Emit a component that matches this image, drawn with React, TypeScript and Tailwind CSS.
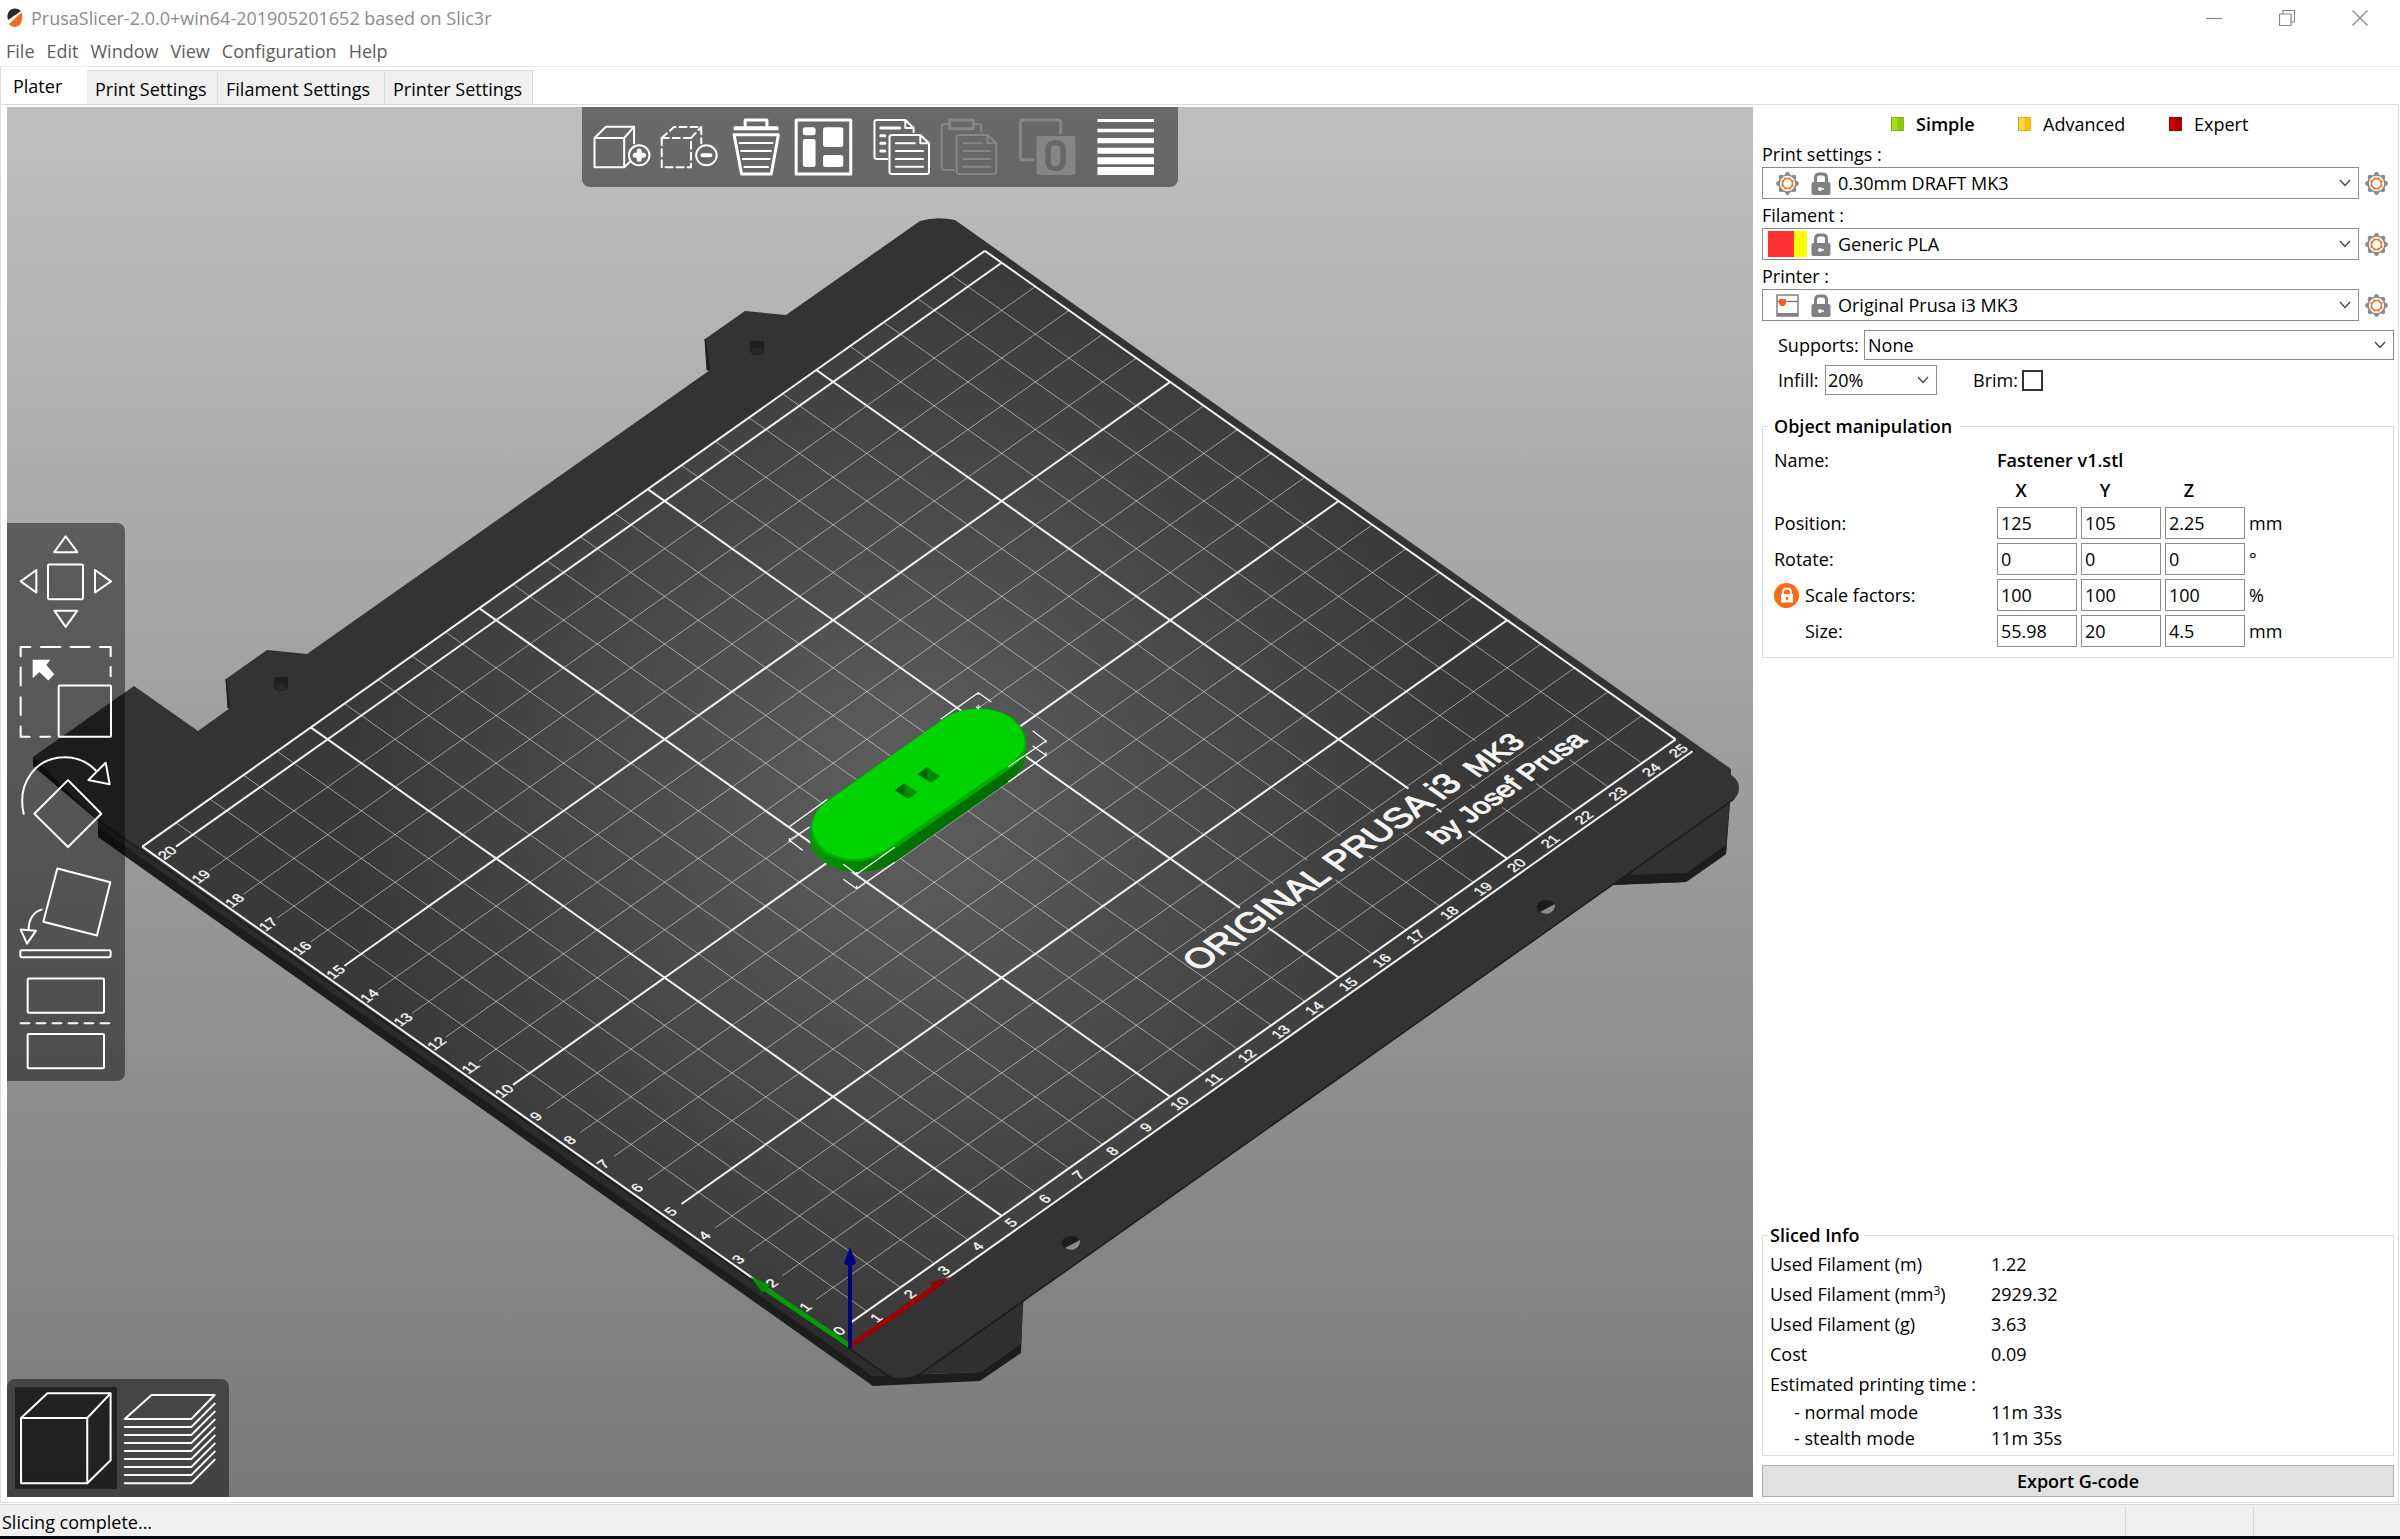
import React from "react";

const UNIT_X = 33.7;
const UNIT_Y = 23.83;
const ORIGIN_X = 850;
const ORIGIN_Y = 1347;

/* Project a point on the print bed (centimetres) to the scene. */
function project(x: number, y: number): [number, number] {
  return [ORIGIN_X + (x - y) * UNIT_X, ORIGIN_Y - (x + y) * UNIT_Y];
}

function BedLine({ a, b, bold = false }: { a: [number, number]; b: [number, number]; bold?: boolean }) {
  const [x1, y1] = project(a[0], a[1]);
  const [x2, y2] = project(b[0], b[1]);
  return (
    <line
      x1={x1}
      y1={y1}
      x2={x2}
      y2={y2}
      stroke={bold ? "#f4f4f4" : "#ffffff"}
      strokeOpacity={bold ? 1 : 0.5}
      strokeWidth={bold ? 2 : 1}
    />
  );
}

function Grid() {
  const lines: React.ReactNode[] = [];
  for (let x = 1; x <= 24; x++) {
    const bold = x % 5 === 0;
    const spans: [number, number][] =
      x >= 20 && x <= 23
        ? [[0.5, 1.65], [2.45, 2.6], [3.43, 21]]
        : x >= 14 && x <= 19
          ? [[0.5, 2.6], [3.43, 21]]
          : [[0.5, 21]];
    spans.forEach(([from, to]) =>
      lines.push(<BedLine key={`x${x}-${from}`} a={[x, from]} b={[x, to]} bold={bold} />),
    );
  }
  for (let k = 0; k <= 20; k++) {
    lines.push(<BedLine key={`y${k}`} a={[0.5, k + 0.5]} b={[25, k + 0.5]} bold={k % 5 === 0} />);
  }
  return (
    <g>
      {lines}
      <BedLine a={[0, 0]} b={[25, 0]} bold />
      <BedLine a={[0, 0]} b={[0, 21]} bold />
      <BedLine a={[0, 21]} b={[25, 21]} bold />
      <BedLine a={[25, 0.5]} b={[25, 21]} bold />
    </g>
  );
}

function BedLabels() {
  return (
    <g
      transform="matrix(0.337 -0.2383 0.337 0.2383 850 1347)"
      fill="#f4f4f4"
      fontFamily="'Liberation Sans', Arial, sans-serif"
    >
      <g fontSize="35" textAnchor="middle" stroke="#f4f4f4" strokeWidth="1">
        {Array.from({ length: 25 }, (_, i) => (
          <text key={`x${i}`} x={i === 24 ? 2480 : (i + 1) * 100} y={-10}>
            {i + 1}
          </text>
        ))}
        {Array.from({ length: 21 }, (_, i) => (
          <text key={`y${i}`} x={i > 9 ? 24 : 18} y={-(i * 100 + 38)}>
            {i}
          </text>
        ))}
      </g>
      <g stroke="#f4f4f4" strokeWidth="3">
        <text x="1304" y="-269" fontSize="83">
          ORIGINAL PRUSA i3
        </text>
        <text x="2124" y="-263" fontSize="71">
          MK3
        </text>
        <text x="1930" y="-177" fontSize="66">
          by Josef Prusa
        </text>
      </g>
    </g>
  );
}

function Model() {
  return (
    <g transform="translate(760 660) scale(0.33333)">
      <path
        d="M150 500 V545 C158 590 215 636 290 637 C345 637 385 620 430 588 L745 366 C785 336 798 305 798 285 V235 Z"
        fill="url(#side)"
      />
      <path
        d="M548 178 C600 138 700 132 755 172 C815 222 815 280 752 325 L430 548 C345 612 255 620 195 580 C140 535 138 470 198 424 Z"
        fill="#00ab00"
      />
      <path
        d="M548 179 C600 140 698 134 752 174 C808 222 808 270 748 313 L405 550 C340 603 260 612 200 574 C144 530 142 470 200 425 Z"
        fill="#00d400"
      />
      <path d="M473 343 L502 321 L541 349 L514 369 Z" fill="#008c00" />
      <path d="M473 343 L502 321 V360 Z" fill="#006400" />
      <path d="M405 391 L433 370 L472 396 L445 418 Z" fill="#008c00" />
      <path d="M405 391 L433 370 V409 Z" fill="#006400" />
      <g fill="none" stroke="#fff" strokeWidth="3.6">
        <path d="M542 178 L655 98 L694 126 M655 98 V104 M655 134 V146 L648 140 M655 144 L661 140" />
        <path d="M818 212 L858 243 L745 320 M858 240 V249 M818 258 L858 286 L745 366 M858 289 V277" />
        <path d="M202 418 L88 500 L92 506 M128 571 L88 541 L148 501 M88 534 V547" />
        <path d="M404 562 L290 643 L250 613 M290 636 V648 M404 607 L290 686 L250 658 M290 677 V687" />
      </g>
    </g>
  );
}

function Scene() {
  const area = [project(0, 0), project(25, 0), project(25, 21), project(0, 21)]
    .map((p) => p.join(","))
    .join(" ");
  return (
    <svg className="block h-full w-full" viewBox="7 107 1746 1390" preserveAspectRatio="xMidYMid slice" role="img" aria-label="Print bed">
      <defs>
        <radialGradient id="glow" gradientUnits="userSpaceOnUse" cx="910" cy="800" r="560">
          <stop offset="0" stopColor="#5f5f5f" />
          <stop offset="0.5" stopColor="#4b4b4b" />
          <stop offset="1" stopColor="#393939" />
        </radialGradient>
        <linearGradient id="side" x1="0" y1="0" x2="1" y2="0">
          <stop offset="0" stopColor="#009a00" />
          <stop offset="0.35" stopColor="#007400" />
          <stop offset="0.9" stopColor="#006c00" />
          <stop offset="1" stopColor="#008600" />
        </linearGradient>
      </defs>
      {/* frame under the bed */}
      <path
        d="M33 757 L97 800 L873 1376 L980 1372 L1020 1344 L1023 1290 L1611 876 L1686 873 L1726 845 L1730 790 L1730 803 L1726 854 L1686 882 L1611 885 L1550 900 L1023 1300 L1021 1353 L980 1381 L873 1386 L98 837 V821 L33 766 Z"
        fill="#1d1d1d"
      />
      <path d="M873 1376 L980 1372 L1021 1344 L1024 1290 L860 1340 Z" fill="#303030" />
      <path d="M1611 885 L1634 865 L1730 790 L1726 854 L1686 882 Z" fill="#1d1d1d" />
      <path d="M1629 875 L1686 873 L1726 845 L1730 790 Z" fill="#313131" />
      <path d="M98 821 L98 827 L873 1376 L900 1376 L860 1340 Z" fill="#2b2b2b" />
      {/* top surface */}
      <path
        d="M33 757 L134 686 L198 731 L230 708 L226 679 L267 650 L307 654 L710 370 L705 339 L745 311 L786 315 L920 221 Q936 216 955 220 L1731 769 V775 Q1739 780 1739 788 Q1739 795 1734 799 L920 1374 Q902 1384 887 1375 L98 821 Z"
        fill="#333333"
      />
      <path d="M98 820 L887 1375 Q902 1384 920 1374 L1734 799" fill="none" stroke="#1c1c1c" strokeWidth="1.5" />
      <path d="M230 708 L226 679 L228 708 Z M710 370 L705 339 L707 370 Z" fill="#1d1d1d" stroke="#1d1d1d" />
      {[
        [281, 683],
        [757, 347],
      ].map(([cx, cy]) => (
        <g key={cx}>
          <path d={`M${cx - 7} ${cy - 6} V${cy + 4} A7 4 0 0 0 ${cx + 7} ${cy + 4} V${cy - 6} Z`} fill="#202020" />
          <ellipse cx={cx} cy={cy + 4} rx="5" ry="3" fill="#2b2b2b" />
        </g>
      ))}
      {[
        [1546, 907],
        [1071, 1243],
      ].map(([cx, cy]) => (
        <g key={cx}>
          <ellipse cx={cx} cy={cy} rx="9.5" ry="7" fill="#1c1c1c" />
          <path d={`M${cx - 6} ${cy + 5} L${cx + 9} ${cy - 3} Q${cx + 10} ${cy + 4} ${cx + 2} ${cy + 7} Q${cx - 3} ${cy + 7} ${cx - 6} ${cy + 5} Z`} fill="#8b8b8b" />
        </g>
      ))}
      <polygon points={area} fill="url(#glow)" />
      <Grid />
      <BedLabels />
      <Model />
      {/* axes */}
      <g strokeWidth="5">
        <path d="M850 1346 L764 1288" stroke="#009c00" />
        <path d="M750 1276.500 L769 1284.500 Q770 1290 762 1292 Z" fill="#009000" />
        <path d="M850 1346 L935 1287" stroke="#a00000" />
        <path d="M950 1277 L931 1282.500 Q930 1288 936 1290 Z" fill="#900000" />
        <path d="M850 1348 V1262" stroke="#000080" strokeWidth="4" />
        <path d="M850 1247 L844 1263 Q850 1269 856 1263 Z" fill="#000088" />
      </g>
    </svg>
  );
}

/* Line drawing icon: children are plotted in source units and scaled into the box. */
function Glyph({ size, transform, width = 2, children }: { size: number; transform: string; width?: number; children: React.ReactNode }) {
  return (
    <svg
      className="block h-full w-full overflow-visible"
      viewBox={`0 0 ${size} ${size}`}
      fill="none"
      stroke="#fff"
      strokeWidth={width}
      strokeLinejoin="round"
      strokeLinecap="round"
      aria-hidden="true"
    >
      <g transform={transform} className="[&_*]:[vector-effect:non-scaling-stroke]">
        {children}
      </g>
    </svg>
  );
}

function ToolButton({ label, className = "", offset, children, disabled = false }: { label: string; className?: string; offset: number; children: React.ReactNode; disabled?: boolean }) {
  return (
    <button type="button" aria-label={label} disabled={disabled} className={`size-14 ${disabled ? "opacity-20" : ""} ${className}`}>
      <Glyph size={56} transform={`translate(${offset} -19) scale(0.3954 0.3333)`}>
        {children}
      </Glyph>
    </button>
  );
}

function TopToolbar() {
  return (
    <div role="toolbar" aria-label="Object tools" className="absolute top-0 left-1/2 flex h-20 -translate-x-1/2 gap-[11px] rounded-b-lg bg-black/45 pt-3 pr-[26px] pl-3">
      <ToolButton label="Add" offset={-24}>
        <path d="M62 114 H137 V202 H62 Z M62 114 L91 80 H162 V130 M137 114 L162 80 M137 202 L152 185" />
        <ellipse cx="175" cy="166" rx="26" ry="30" />
        <path d="M175 153 V178 M165 166 H186" strokeWidth="5" />
      </ToolButton>
      <ToolButton label="Delete" offset={-91}>
        <g strokeDasharray="7 4">
          <path d="M232 114 H306 V202 H232 Z" />
          <path d="M232 114 L263 81 H332 V130 M306 114 L332 81" />
        </g>
        <ellipse cx="345" cy="166" rx="26" ry="30" />
        <path d="M335 166 H355" strokeWidth="4" />
      </ToolButton>
      <ToolButton label="Delete all" offset={-158}>
        <path d="M443 82 V60 H498 V82" strokeWidth="3" />
        <path d="M414 85 H527" strokeWidth="4" strokeLinecap="butt" />
        <path d="M415 104 H527 L509 222 H434 Z" strokeWidth="3" />
        <path d="M429 129 H512 M433 153 H508 M437 177 H505 M441 201 H501" />
      </ToolButton>
      <ToolButton label="Arrange" offset={-225}>
        <path d="M572 60 H710 V222 H572 Z" strokeWidth="3" />
        <g fill="#fff" stroke="none">
          <rect x="589" y="82" width="32" height="24" rx="6" />
          <rect x="589" y="117" width="32" height="84" rx="6" />
          <rect x="640" y="82" width="51" height="59" rx="6" />
          <rect x="640" y="165" width="51" height="36" rx="6" />
        </g>
      </ToolButton>
      <ToolButton label="Copy" className="ml-[11px]" offset={-303}>
        <path d="M802 177 H776 Q770 177 770 170 V66 Q770 60 776 60 H848 L869 84 V96 M848 60 V84 H869" strokeWidth="2" />
        <path d="M786 84 H834 M786 107 H796 M786 130 H796 M786 153 H796" strokeWidth="3" />
        <path d="M815 105 H886 L908 130 V216 Q908 222 902 222 H815 Q808 222 808 216 V112 Q808 105 815 105 Z M886 105 V130 H908" strokeWidth="2" />
        <path d="M824 130 H872 M824 153 H893 M824 177 H893 M824 200 H893" strokeWidth="2" />
      </ToolButton>
      <ToolButton label="Paste" offset={-370} disabled>
        <path d="M972 210 H947 Q940 210 940 203 V78 Q940 72 947 72 H958 M1020 72 H1034 Q1040 72 1040 78 V96" />
        <path d="M960 60 H1020 V86 H960 Z" strokeWidth="3" />
        <path d="M985 105 H1056 L1078 130 V216 Q1078 222 1072 222 H985 Q978 222 978 216 V112 Q978 105 985 105 Z M1056 105 V130 H1078" />
        <path d="M994 130 H1042 M994 153 H1063 M994 177 H1063 M994 200 H1063" />
      </ToolButton>
      <ToolButton label="Instances" className="ml-[11px]" offset={-448} disabled>
        <path d="M1171 179 H1147 Q1139 179 1139 171 V68 Q1139 60 1147 60 H1233 Q1241 60 1241 68 V99" strokeWidth="3" />
        <path
          fillRule="evenodd"
          fill="#fff"
          stroke="none"
          d="M1186 108 H1272 Q1278 108 1278 114 V219 Q1278 225 1272 225 H1186 Q1180 225 1180 219 V114 Q1180 108 1186 108 Z M1228 120 Q1202 120 1202 150 V184 Q1202 213 1228 213 Q1254 213 1254 184 V150 Q1254 120 1228 120 Z M1228 136 Q1240 136 1240 150 V184 Q1240 198 1228 198 Q1216 198 1216 184 V150 Q1216 136 1228 136 Z"
        />
      </ToolButton>
      <ToolButton label="Layers editing" className="ml-[11px]" offset={-526}>
        <path fill="#fff" stroke="none" d="M1334 57 H1477 V66 H1334 Z M1334 86 H1477 V97 H1334 Z M1334 114 H1477 V130 H1334 Z M1334 143 H1477 V161 H1334 Z M1334 172 H1477 V193 H1334 Z M1334 201 H1477 V225 H1334 Z" />
      </ToolButton>
    </div>
  );
}

function GizmoButton({ label, offset, children }: { label: string; offset: number; children: React.ReactNode }) {
  return (
    <button type="button" aria-label={label} className="size-[92px]">
      <Glyph size={92} transform={`translate(-20 ${offset}) scale(0.3333 0.37)`}>
        {children}
      </Glyph>
    </button>
  );
}

function GizmoToolbar() {
  return (
    <div role="toolbar" aria-label="Gizmos" className="absolute top-1/2 left-0 flex -translate-y-1/2 flex-col gap-[18px] rounded-r-lg bg-black/45 p-[13px]">
      <GizmoButton label="Move" offset={-26}>
        <rect x="144" y="147" width="105" height="94" rx="3" />
        <path d="M197 71 L232 114 H163 Z M197 316 L232 272 H163 Z M62 193 L109 162 V223 Z M333 193 L285 162 V223 Z" />
      </GizmoButton>
      <GizmoButton label="Scale" offset={-136}>
        <rect x="176" y="474" width="157" height="139" rx="3" />
        <path d="M62 395 V370 H91 M123 370 H181 M212 370 H269 M300 370 H332 V395 M332 424 V449 M62 426 V474 M62 506 V554 M62 585 V613 H89 M121 613 H150" />
        <path d="M98 405 H151 L139 419 L163 444 L145 461 L118 438 L98 455 Z" fill="#fff" stroke="none" />
      </GizmoButton>
      <GizmoButton label="Rotate" offset={-246}>
        <path d="M204 730 L304 821 L204 911 L103 821 Z" />
        <path d="M71 821 C50 735 110 668 195 668 C235 668 265 682 290 706 M265 730 L317 683 L329 741 Z" />
      </GizmoButton>
      <GizmoButton label="Place on face" offset={-356}>
        <path d="M172 969 L331 1006 L291 1150 L130 1113 Z M125 1080 C102 1085 86 1105 86 1134 M62 1134 L108 1137 L81 1172 Z" />
        <rect x="61" y="1190" width="271" height="19" rx="4" />
      </GizmoButton>
      <GizmoButton label="Cut" offset={-466}>
        <rect x="83" y="1266" width="229" height="93" rx="3" />
        <rect x="83" y="1416" width="229" height="93" rx="3" />
        <path d="M62 1387 H88 M110 1387 H136 M158 1387 H184 M206 1387 H232 M254 1387 H280 M302 1387 H328" />
      </GizmoButton>
    </div>
  );
}

function ViewToolbar() {
  return (
    <div role="toolbar" aria-label="View" className="absolute bottom-0 left-0 flex h-[118px] rounded-t-lg bg-black/45 py-2 pr-2.5 pl-2">
      <button type="button" aria-label="3D editor view" className="size-[102px] bg-black/50">
        <Glyph size={102} transform="translate(-15 -27) scale(0.3827 0.3333)">
          <path d="M55 174 H228 V370 H55 Z M55 174 L124 100 H289 V301 L228 370 M228 174 L289 100" />
        </Glyph>
      </button>
      <button type="button" aria-label="Preview" className="size-[102px]">
        <Glyph size={102} transform="translate(-117 -27) scale(0.3827 0.3333)">
          <path d="M326 177 L396 105 H561 L500 177 Z" />
          <path d="M326 201 H500 L561 131 M326 225 H500 L561 155 M326 249 H500 L561 179 M326 273 H500 L561 203 M326 297 H500 L561 227 M326 321 H500 L561 251 M326 345 H500 L561 275 M326 370 H500 L561 299" />
        </Glyph>
      </button>
    </div>
  );
}

function Gear() {
  const teeth = Array.from({ length: 8 }, (_, i) => (i * Math.PI) / 4);
  return (
    <svg className="size-[23px] shrink-0" viewBox="0 0 23 23" aria-hidden="true">
      <g fill="#8a8a8a">
        {teeth.map((t) => (
          <circle key={t} cx={11.5 + 9 * Math.cos(t)} cy={11.5 + 9 * Math.sin(t)} r="2.4" />
        ))}
      </g>
      <circle cx="11.5" cy="11.5" r="8.5" fill="#fff" stroke="#8a8a8a" strokeWidth="1.6" />
      <circle cx="11.5" cy="11.5" r="5" fill="none" stroke="#f47023" strokeWidth="1.5" />
      <g fill="#f47023">
        {teeth.map((t) => (
          <circle key={t} cx={11.5 + 5.6 * Math.cos(t + 0.39)} cy={11.5 + 5.6 * Math.sin(t + 0.39)} r="1" />
        ))}
      </g>
    </svg>
  );
}

function Lock() {
  return (
    <svg className="h-[23px] w-5 shrink-0" viewBox="0 0 20 23" aria-hidden="true">
      <path d="M4.5 11 V6 Q4.5 2 8 2 H12 Q15.5 2 15.5 6 V11" fill="none" stroke="#808080" strokeWidth="3" />
      <rect x="0.5" y="10" width="19" height="13" rx="2" fill="#808080" />
      <circle cx="9" cy="17" r="2" fill="#fff" />
      <path d="M10 17 H13" stroke="#fff" strokeWidth="1.5" />
    </svg>
  );
}

function PrinterIcon() {
  return (
    <svg className="size-[23px] shrink-0" viewBox="0 0 23 23" aria-hidden="true">
      <rect x="1" y="1" width="21" height="21" fill="#fff" stroke="#808080" strokeWidth="1.5" />
      <path d="M1 7.5 H22" stroke="#808080" strokeWidth="1.5" />
      <path d="M1 20.5 H22" stroke="#808080" strokeWidth="3" />
      <path d="M3 5 H10 V10 L8 12 H5 L3 10 Z" fill="#f0641e" />
    </svg>
  );
}

function Chevron() {
  return (
    <svg className="pointer-events-none h-2 w-3 shrink-0" viewBox="0 0 12 8" fill="none" stroke="#444" strokeWidth="1.3" aria-hidden="true">
      <path d="M1 1 L6 6.5 L11 1" />
    </svg>
  );
}

function PresetRow({ id, label, value, icon }: { id: string; label: string; value: string; icon: React.ReactNode }) {
  return (
    <div>
      <label htmlFor={id} className="block h-[29px] pt-1">
        {label}
      </label>
      <div className="flex items-center gap-1.5">
        <div className="flex h-8 flex-1 items-center border border-[#8c8c8c] bg-white pr-[7px]">
          <span className="flex w-12 items-center justify-center">{icon}</span>
          <Lock />
          <select id={id} className="h-full flex-1 appearance-none bg-transparent pl-[7px] outline-none">
            <option>{value}</option>
          </select>
          <Chevron />
        </div>
        <button type="button" aria-label={`Edit ${label}`} className="mr-1.5">
          <Gear />
        </button>
      </div>
    </div>
  );
}

function Manipulation() {
  const rows: { label: string; values: string[]; unit: string; lock?: boolean; indent?: boolean }[] = [
    { label: "Position:", values: ["125", "105", "2.25"], unit: "mm" },
    { label: "Rotate:", values: ["0", "0", "0"], unit: "°" },
    { label: "Scale factors:", values: ["100", "100", "100"], unit: "%", lock: true },
    { label: "Size:", values: ["55.98", "20", "4.5"], unit: "mm", indent: true },
  ];
  return (
    <fieldset className="mt-[19px] border border-[#dcdcdc] pb-2.5 pl-[11px]">
      <legend className="-ml-1.5 pr-2 pl-1.5 font-semibold">Object manipulation</legend>
      <div className="grid grid-cols-[219px_80px_80px_80px_auto] items-center gap-x-1 gap-y-1 pt-2">
        <span className="h-7 leading-7">Name:</span>
        <span className="col-span-4 h-7 leading-7 font-semibold">Fastener v1.stl</span>
        <span />
        {["X", "Y", "Z"].map((axis) => (
          <span key={axis} className="h-[25px] pr-8 text-center font-semibold">
            {axis}
          </span>
        ))}
        <span />
        {rows.map((row) => (
          <React.Fragment key={row.label}>
            <span className="flex items-center">
              {row.lock && (
                <button type="button" aria-label="Lock scale" className="mr-1.5 flex size-[25px] items-center justify-center rounded-full bg-[#ff6a10]">
                  <svg className="size-4" viewBox="0 0 16 16" aria-hidden="true">
                    <path d="M4 8 V5 Q4 1.5 8 1.5 Q12 1.5 12 5 V8" fill="none" stroke="#fff" strokeWidth="2" />
                    <rect x="2" y="7" width="12" height="8.5" fill="#fff" />
                    <path d="M8 10 V13" stroke="#ff6a10" strokeWidth="2" />
                  </svg>
                </button>
              )}
              <span className={row.indent ? "pl-[31px]" : ""}>{row.label}</span>
            </span>
            {row.values.map((value, i) => (
              <input
                key={i}
                aria-label={`${row.label} ${"XYZ"[i]}`}
                defaultValue={value}
                className="h-8 w-full border border-[#8c8c8c] bg-white pl-[3px] outline-none"
              />
            ))}
            <span>{row.unit}</span>
          </React.Fragment>
        ))}
      </div>
    </fieldset>
  );
}

function SlicedInfo() {
  const rows: [React.ReactNode, string][] = [
    ["Used Filament (m)", "1.22"],
    [
      <>
        Used Filament (mm<sup className="text-xs">3</sup>)
      </>,
      "2929.32",
    ],
    ["Used Filament (g)", "3.63"],
    ["Cost", "0.09"],
    ["Estimated printing time :", ""],
  ];
  const times = [
    ["- normal mode", "11m 33s"],
    ["- stealth mode", "11m 35s"],
  ];
  return (
    <fieldset className="border border-[#dcdcdc] pb-1 pl-[7px]">
      <legend className="-ml-0.5 pr-1 pl-0.5 font-semibold">Sliced Info</legend>
      <table className="mt-0.5 text-left">
        <tbody>
          {rows.map(([name, value], i) => (
            <tr key={i} className="h-[30px]">
              <th scope="row" className="w-[221px] font-normal">
                {name}
              </th>
              <td>{value}</td>
            </tr>
          ))}
          {times.map(([name, value]) => (
            <tr key={name} className="h-[26px]">
              <th scope="row" className="pl-6 font-normal">
                {name}
              </th>
              <td>{value}</td>
            </tr>
          ))}
        </tbody>
      </table>
    </fieldset>
  );
}

function ModeButton({ color, label, active = false, className = "" }: { color: string; label: string; active?: boolean; className?: string }) {
  return (
    <button type="button" className={`flex items-center gap-3 ${active ? "font-semibold" : ""} ${className}`}>
      <span className={`h-3.5 w-[13px] border border-black/15 bg-linear-to-r ${color}`} />
      {label}
    </button>
  );
}

function SidePanel() {
  return (
    <aside className="flex w-[645px] shrink-0 flex-col pr-1 pl-[9px]">
      <div className="flex h-[31px] items-center pt-[3px] pl-[129px]">
        <ModeButton active color="from-[#a6dc1c] from-50% to-[#93c90c] to-50%" label="Simple" className="w-[127px]" />
        <ModeButton color="from-[#ffd84a] from-40% to-[#fcc200] to-60%" label="Advanced" className="w-[151px]" />
        <ModeButton color="from-[#d40000] from-50% to-[#a80000] to-50%" label="Expert" />
      </div>
      <PresetRow id="print" label="Print settings :" value="0.30mm DRAFT MK3" icon={<Gear />} />
      <PresetRow
        id="filament"
        label="Filament :"
        value="Generic PLA"
        icon={
          <span className="flex h-[26px]">
            <span className="w-[26px] bg-[#ff3333]" />
            <span className="w-[13px] bg-[#ffff00]" />
          </span>
        }
      />
      <PresetRow id="printer" label="Printer :" value="Original Prusa i3 MK3" icon={<PrinterIcon />} />
      <div className="mt-[9px] flex items-center pl-4">
        <label htmlFor="supports" className="w-[86px] whitespace-nowrap">
          Supports:
        </label>
        <div className="flex h-[30px] flex-1 items-center border border-[#8c8c8c] pr-[7px]">
          <select id="supports" className="h-full flex-1 appearance-none bg-transparent pl-[3px] outline-none">
            <option>None</option>
          </select>
          <Chevron />
        </div>
      </div>
      <div className="mt-[5px] flex items-center pl-4">
        <label htmlFor="infill" className="w-[47px]">
          Infill:
        </label>
        <div className="flex h-[30px] w-28 items-center border border-[#8c8c8c] pr-[7px]">
          <select id="infill" className="h-full min-w-0 flex-1 appearance-none bg-transparent pl-0.5 outline-none">
            <option>20%</option>
          </select>
          <Chevron />
        </div>
        <label htmlFor="brim" className="ml-9 w-[49px]">
          Brim:
        </label>
        <input id="brim" type="checkbox" className="size-[21px] appearance-none border-2 border-[#333] bg-white" />
      </div>
      <Manipulation />
      <div className="mt-auto" />
      <SlicedInfo />
      <button type="button" className="mt-[9px] h-8 border border-[#adadad] bg-[#e1e1e1] font-semibold">
        Export G-code
      </button>
    </aside>
  );
}

export default function App() {
  return (
    <div className="flex h-screen flex-col bg-white font-['Open_Sans','Noto_Sans',sans-serif] text-[18px] leading-6 text-black">
      <header className="flex h-9 items-center justify-between pr-8 pl-[7px] text-[#8c8c8c]">
        <h1 className="flex items-center gap-2">
          <svg className="h-5 w-4" viewBox="0 0 16 20" aria-hidden="true">
            <path d="M1 12 Q-1 5 4 1.5 Q9 -1 14 3 Z" fill="#2b2b2b" />
            <path d="M2 16 L14.5 4.5 Q17 12 12 17.5 Q6 21 2 16 Z" fill="#ee6b22" />
          </svg>
          PrusaSlicer-2.0.0+win64-201905201652 based on Slic3r
        </h1>
        <div className="flex gap-[57px]">
          {[
            ["Minimize", "M0 8.5 H16"],
            ["Restore", "M0.5 4 H12 V15.5 H0.5 Z M4 4 V0.5 H15.5 V12 H12"],
            ["Close", "M0.5 0.5 L15.5 15.5 M15.5 0.5 L0.5 15.5"],
          ].map(([label, d]) => (
            <button key={label} type="button" aria-label={label}>
              <svg className="size-4" viewBox="0 0 16 16" fill="none" stroke="#858585" strokeWidth="1.2">
                <path d={d} />
              </svg>
            </button>
          ))}
        </div>
      </header>
      <nav className="flex h-[31px] items-center gap-3 border-b border-[#e8e8e8] pl-1.5 text-[#5c5c5c]">
        {["File", "Edit", "Window", "View", "Configuration", "Help"].map((item) => (
          <button key={item} type="button">
            {item}
          </button>
        ))}
      </nav>
      <div role="tablist" className="flex h-[37px] items-end">
        <button type="button" role="tab" aria-selected="true" className="h-[37px] w-[87px] border-l border-[#dcdcdc] pl-3 text-left">
          Plater
        </button>
        {[
          ["Print Settings", "w-[131px]"],
          ["Filament Settings", "w-[167px]"],
          ["Printer Settings", "w-[148px]"],
        ].map(([name, width]) => (
          <button key={name} type="button" role="tab" className={`h-[34px] border-t border-r border-[#dcdcdc] bg-[#f0f0f0] pt-0.5 pl-2 text-left whitespace-nowrap ${width}`}>
            {name}
          </button>
        ))}
      </div>
      <main className="mr-px flex min-h-0 flex-1 border border-[#dcdcdc] pt-0.5 pb-[5px] pl-1.5">
        <section className="relative min-w-0 flex-1 overflow-hidden bg-linear-to-b from-[#bfbfbf] to-[#7a7a7a]">
          <Scene />
          <TopToolbar />
          <GizmoToolbar />
          <ViewToolbar />
        </section>
        <SidePanel />
      </main>
      <footer className="mt-px flex h-8 items-center border-t border-[#d7d7d7] bg-[#f0f0f0] pt-0.5">
        <span className="flex-1 pl-0.5">Slicing complete...</span>
        <span className="h-full w-32 border-l border-[#d7d7d7]" />
        <span className="h-full w-[147px] border-l border-[#d7d7d7]" />
      </footer>
      <div className="h-[3px] bg-[#05070d]" />
    </div>
  );
}
